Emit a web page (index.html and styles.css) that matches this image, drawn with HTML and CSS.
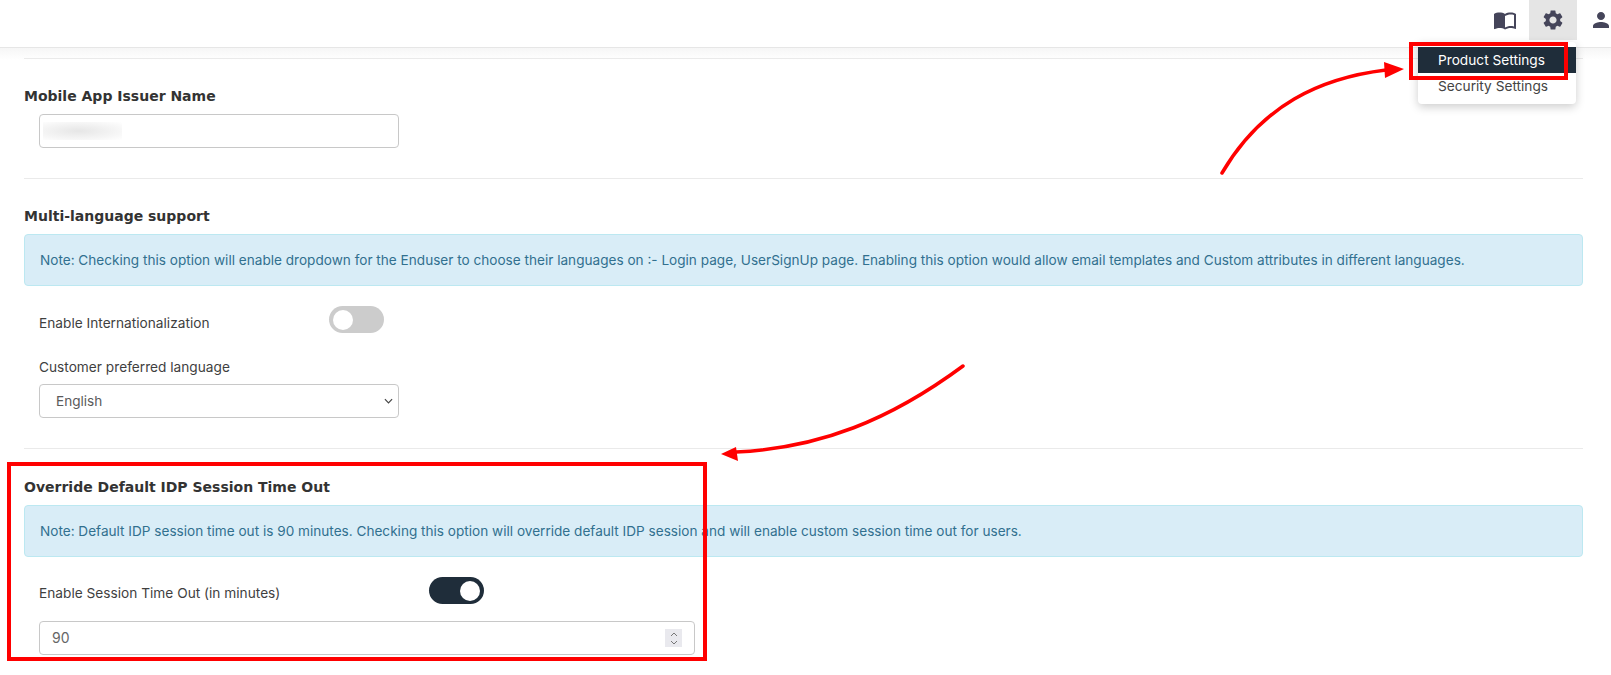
FILE: index.html
```html
<!DOCTYPE html>
<html lang="en">
<head>
<meta charset="utf-8">
<title>Product Settings</title>
<link rel="stylesheet" href="styles.css">
</head>
<body>
<div class="page">
  <header class="topbar">
    <span class="tool tool-book"><svg class="icon" viewBox="0 0 24 24"><path d="M21 5c-1.11-.35-2.33-.5-3.5-.5-1.95 0-4.05.4-5.5 1.5-1.45-1.1-3.55-1.5-5.5-1.5S2.45 4.9 1 6v14.65c0 .25.25.5.5.5.1 0 .15-.05.25-.05C3.1 20.45 5.05 20 6.5 20c1.95 0 4.05.4 5.5 1.5 1.35-.85 3.8-1.5 5.5-1.5 1.65 0 3.35.3 4.75 1.05.1.05.15.05.25.05.25 0 .5-.25.5-.5V6c-.6-.45-1.25-.75-2-1zm0 13.5c-1.1-.35-2.3-.5-3.5-.5-1.7 0-4.15.65-5.5 1.5V8c1.35-.85 3.8-1.5 5.5-1.5 1.2 0 2.4.15 3.5.5v11.5z"/></svg></span>
    <span class="tool tool-gear"><svg class="icon" viewBox="0 0 24 24"><path d="M19.14 12.94c.04-.3.06-.61.06-.94 0-.32-.02-.64-.07-.94l2.03-1.58a.49.49 0 0 0 .12-.61l-1.92-3.32a.488.488 0 0 0-.59-.22l-2.39.96c-.5-.38-1.03-.7-1.62-.94l-.36-2.54a.484.484 0 0 0-.48-.41h-3.84c-.24 0-.43.17-.47.41l-.36 2.54c-.59.24-1.13.57-1.62.94l-2.39-.96c-.22-.08-.47 0-.59.22L2.74 8.87c-.12.21-.08.47.12.61l2.03 1.58c-.05.3-.09.63-.09.94s.02.64.07.94l-2.03 1.58a.49.49 0 0 0-.12.61l1.92 3.32c.12.22.37.29.59.22l2.39-.96c.5.38 1.03.7 1.62.94l.36 2.54c.05.24.24.41.48.41h3.84c.24 0 .44-.17.47-.41l.36-2.54c.59-.24 1.13-.56 1.62-.94l2.39.96c.22.08.47 0 .59-.22l1.92-3.32c.12-.22.07-.47-.12-.61l-2.01-1.58zM12 15.6c-1.98 0-3.6-1.62-3.6-3.6s1.62-3.6 3.6-3.6 3.6 1.62 3.6 3.6-1.62 3.6-3.6 3.6z"/></svg></span>
    <span class="tool tool-user"><svg class="icon" viewBox="0 0 24 24"><path d="M12 12c2.21 0 4-1.79 4-4s-1.79-4-4-4-4 1.79-4 4 1.79 4 4 4zm0 2c-2.67 0-8 1.34-8 4v2h16v-2c0-2.66-5.33-4-8-4z"/></svg></span>
  </header>

  <main class="content">
    <section class="block">
      <h2 class="block-title">Mobile App Issuer Name</h2>
      <div class="text-input issuer"><span class="blurred"></span></div>
    </section>

    <section class="block">
      <h2 class="block-title">Multi-language support</h2>
      <p class="note">Note: Checking this option will enable dropdown for the Enduser to choose their languages on :- Login page, UserSignUp page. Enabling this option would allow email templates and Custom attributes in different languages.</p>
      <div class="toggle-row">
        <span class="toggle-label label-i18n">Enable Internationalization</span>
        <span class="switch"><span class="knob"></span></span>
      </div>
      <div class="field-label">Customer preferred language</div>
      <div class="text-input select-box">
        <span>English</span>
        <svg class="chevron" viewBox="0 0 10 6"><path d="M1 1l4 4 4-4"/></svg>
      </div>
    </section>

    <section class="block block-last">
      <h2 class="block-title">Override Default IDP Session Time Out</h2>
      <p class="note">Note: Default IDP session time out is 90 minutes. Checking this option will override default IDP session and will enable custom session time out for users.</p>
      <div class="toggle-row toggle-row-on">
        <span class="toggle-label label-session">Enable Session Time Out (in minutes)</span>
        <span class="switch switch-on"><span class="knob"></span></span>
      </div>
      <div class="text-input number-box">
        <span class="number-value">90</span>
        <span class="spinner">
          <svg viewBox="0 0 8 5"><path d="M1 4l3-3 3 3"/></svg>
          <svg viewBox="0 0 8 5"><path d="M1 1l3 3 3-3"/></svg>
        </span>
      </div>
    </section>
  </main>

  <div class="menu">
    <div class="menu-item menu-item-active">Product Settings</div>
    <div class="menu-item">Security Settings</div>
  </div>

  <svg class="annotations" viewBox="0 0 1611 675">
    <rect class="ann-box" x="1411" y="44" width="155" height="34"/>
    <rect class="ann-box" x="9" y="464" width="696" height="195"/>
    <path class="ann-line" d="M1222 173C1262 105 1320 78 1386 70"/>
    <polygon class="ann-head" points="1404,69 1384,62 1385,78"/>
    <path class="ann-line" d="M963 366C890 420 820 448 736 452"/>
    <polygon class="ann-head" points="721,454 736,447 738,461"/>
  </svg>
</div>
</body>
</html>
```
FILE: styles.css
```css
* { box-sizing: border-box; }
html, body { margin: 0; padding: 0; background: #fff; }
.page {
  position: relative;
  width: 1611px;
  height: 675px;
  overflow: hidden;
  font-family: "Inter", "Liberation Sans", sans-serif;
  font-size: 13.7px;
  color: #3f3f3f;
}
.topbar {
  display: flex;
  justify-content: flex-end;
  align-items: flex-start;
  height: 48px;
  border-bottom: 1px solid #e6e6e6;
  background: #fff;
}
.tool {
  display: flex;
  align-items: center;
  justify-content: center;
  height: 40px;
  width: 48px;
}
.tool-user { width: 34px; justify-content: flex-start; padding-left: 12px; }
.tool-gear { background: #e5e5e5; }
.icon { flex: none; width: 24px; height: 24px; fill: #45455a; }
.content {
  padding: 10px 28px 0 24px;
  background: linear-gradient(#f6f6f6, #fff 12px) no-repeat;
}
.block {
  border-top: 1px solid #eaeaea;
  padding-top: 27px;
  padding-bottom: 30px;
}
.block-last { padding-top: 28px; padding-bottom: 0; }
.block-title {
  margin: 0 0 8px;
  height: 20px;
  line-height: 20px;
  font-family: "DejaVu Sans", sans-serif;
  font-size: 14px;
  font-weight: 700;
  color: #333;
}
.text-input {
  display: flex;
  align-items: center;
  justify-content: space-between;
  margin-left: 15px;
  border: 1px solid #c8c8c8;
  border-radius: 4px;
  background: #fff;
  color: #5a5a5a;
  font-size: 13.6px;
}
.issuer { width: 360px; height: 34px; padding-left: 3px; }
.blurred {
  width: 79px;
  height: 18px;
  background: radial-gradient(ellipse at 45% 50%, #e6e6e6, #f6f6f6 65%, #fff);
}
.select-box { width: 360px; height: 34px; padding: 0 5px 0 16px; }
.chevron { width: 9px; height: 6px; fill: none; stroke: #444; stroke-width: 1.3; }
.number-box { width: 656px; height: 34px; padding: 0 12px 0 12px; }
.number-value { padding-bottom: 2px; font-size: 14px; color: #666; }
.spinner {
  display: flex;
  flex-direction: column;
  align-items: center;
  justify-content: center;
  gap: 3px;
  width: 17px;
  height: 18px;
  background: #e9e9ee;
}
.spinner svg { width: 8px; height: 5px; fill: none; stroke: #777; stroke-width: 1; }
.note {
  margin: 0;
  height: 52px;
  padding: 0 15px;
  line-height: 50px;
  border: 1px solid #bce8f1;
  border-radius: 4px;
  background: #d9edf7;
  color: #31708f;
  font-size: 13.6px;
  white-space: nowrap;
}
.toggle-row {
  display: flex;
  align-items: flex-start;
  margin: 20px 0 0 15px;
  height: 27px;
}
.toggle-row-on { margin-bottom: 17px; }
.toggle-label { padding-top: 7px; line-height: 20px; }
.label-i18n { width: 290px; }
.label-session { width: 390px; padding-top: 6px; }
.switch {
  display: flex;
  align-items: center;
  justify-content: flex-start;
  width: 55px;
  height: 27px;
  padding: 0 4px;
  border-radius: 14px;
  background: #ccc;
}
.switch-on { justify-content: flex-end; background: #1f2d3a; }
.knob { width: 20px; height: 20px; border-radius: 50%; background: #fff; }
.field-label {
  margin: 24px 0 7px 15px;
  height: 20px;
  line-height: 20px;
}
.menu {
  position: absolute;
  left: 1418px;
  top: 42px;
  width: 158px;
  height: 62px;
  padding-top: 5px;
  border-radius: 4px;
  background: #fff;
  box-shadow: 0 3px 10px rgba(0, 0, 0, .2);
}
.menu-item {
  height: 26px;
  line-height: 26px;
  padding-left: 20px;
  color: #444;
}
.menu-item-active { background: #1f2d3a; color: #fff; }
.annotations { position: absolute; left: 0; top: 0; width: 1611px; height: 675px; pointer-events: none; }
.ann-box { fill: none; stroke: #f00; stroke-width: 4; }
.ann-line { fill: none; stroke: #f00; stroke-width: 3.5; stroke-linecap: round; }
.ann-head { fill: #f00; }
```
